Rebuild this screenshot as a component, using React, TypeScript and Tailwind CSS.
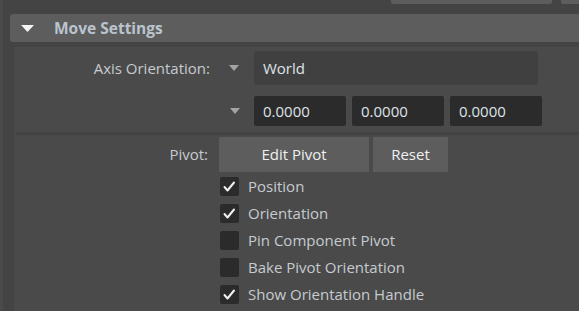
import React from "react";

const font = { fontFamily: '"Open Sans", "Noto Sans", sans-serif' };

function Tri({ color = "#a3a3a3" }: { color?: string }) {
  return (
    <svg width="10" height="6" viewBox="0 0 10 6">
      <polygon points="0,0 10,0 5,6" fill={color} />
    </svg>
  );
}

function Check() {
  return (
    <svg width="19" height="19" viewBox="0 0 19 19">
      <polyline points="4.5,10 7.5,13.5 14,5.5" fill="none" stroke="#f0f0f0" strokeWidth="2" strokeLinecap="round" strokeLinejoin="round" />
    </svg>
  );
}

function CheckRow({ label, checked }: { label: string; checked: boolean }) {
  return (
    <div className="flex items-center h-[19px]">
      <div className="w-[19px] h-[19px] rounded-[2px] bg-[#2b2b2b] flex items-center justify-center">
        {checked && <Check />}
      </div>
      <span className="ml-[9px] text-[15px] text-[#c6cbd0] leading-none">{label}</span>
    </div>
  );
}

function NumField() {
  return (
    <div className="h-[30px] w-[92px] rounded-[2px] bg-[#2b2b2b] flex items-center pl-[9px] text-[15px] text-[#dfe3e8]">
      0.0000
    </div>
  );
}

export default function App() {
  return (
    <div className="w-[579px] h-[311px] bg-[#444444] flex overflow-hidden" style={font}>
      <div className="w-[3px] h-full bg-[#4a4a4a]" />
      <div className="flex-1 flex flex-col">
        <div className="h-[4px] flex">
          <div className="ml-[388px] w-[161px] h-[4px] bg-[#5d5d5d] rounded-b-[2px]" />
          <div className="ml-[9px] flex-1 h-[4px] bg-[#5d5d5d] rounded-bl-[2px]" />
        </div>
        <div className="mt-[10px] ml-[7px] h-[28px] bg-[#5d5d5d] rounded-l-[3px] flex items-center">
          <div className="ml-[11px] w-[13px] flex items-center">
            <svg width="13" height="7" viewBox="0 0 13 7">
              <polygon points="0,0 13,0 6.5,7" fill="#f5f5f5" />
            </svg>
          </div>
          <span className="ml-[20px] pt-[2px] text-[15.5px] font-bold text-[#bac4ce]">Move Settings</span>
        </div>
        <div className="mt-[5px] ml-[11px] flex-1 bg-[#4a4a4a] flex flex-col pt-[4px]">
          <div className="flex items-center h-[34px]">
            <div className="w-[196px] text-right text-[15px] text-[#c6cbd0]">Axis Orientation:</div>
            <div className="w-[44px] pl-[19px] flex items-center"><Tri /></div>
            <div className="w-[284px] h-[34px] rounded-[3px] bg-[#404040] flex items-center pl-[9px] text-[15px] text-[#dfe3e8]">World</div>
          </div>
          <div className="flex items-center h-[30px] mt-[11px]">
            <div className="w-[196px]" />
            <div className="w-[44px] pl-[20px] flex items-center"><Tri /></div>
            <NumField />
            <div className="ml-[6px]"><NumField /></div>
            <div className="ml-[6px]"><NumField /></div>
          </div>
          <div className="mt-[6px] ml-[2px] h-[3px] bg-[#434343]" />
          <div className="mt-[2px] flex items-center h-[35px]">
            <div className="w-[194px] text-right text-[15px] text-[#c6cbd0]">Pivot:</div>
            <div className="ml-[11px] w-[150px] h-[35px] bg-[#5d5d5d] flex items-center justify-center text-[15px] text-[#eef0f2]">Edit Pivot</div>
            <div className="ml-[4px] w-[75px] h-[35px] bg-[#5d5d5d] flex items-center justify-center text-[15px] text-[#eef0f2]">Reset</div>
          </div>
          <div className="mt-[5px] ml-[206px] flex flex-col gap-[8px]">
            <CheckRow label="Position" checked />
            <CheckRow label="Orientation" checked />
            <CheckRow label="Pin Component Pivot" checked={false} />
            <CheckRow label="Bake Pivot Orientation" checked={false} />
            <CheckRow label="Show Orientation Handle" checked />
          </div>
        </div>
      </div>
    </div>
  );
}
